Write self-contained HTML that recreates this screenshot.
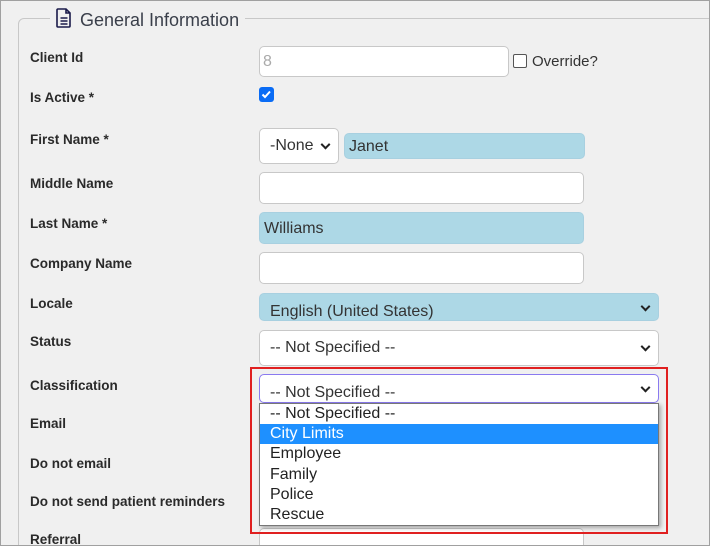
<!DOCTYPE html><html style="width:710px;height:546px;overflow:hidden"><head><style>
body{margin:0;width:710px;height:546px;overflow:hidden;background:#f0f0f0;font-family:"Liberation Sans",sans-serif;position:relative}
.frame{position:absolute;left:0;top:0;width:708px;height:544px;border:1px solid #a0a0a0;z-index:5;pointer-events:none}
.fs{position:absolute;left:18px;top:18px;width:700px;height:540px;border:1px solid #c8c8c8;border-radius:6px}
.leg{position:absolute;left:50px;top:8px;background:#f0f0f0;padding:0 6px;font-size:18px;color:#3a3f4a}
.l{position:absolute;left:30px;font-size:13.5px;font-weight:bold;color:#2a2a2a}
.i{position:absolute;background:#fff;border:1px solid #c8c8c8;border-radius:5px;box-sizing:border-box;font-size:16px;color:#333;padding-left:10px;overflow:hidden;white-space:nowrap}
.b{background:#add8e6;border-color:#a8d0e0}
.ch{position:absolute;right:9px;top:50%;width:5px;height:5px;border-right:2px solid #222;border-bottom:2px solid #222;transform:translateY(-70%) rotate(45deg)}
.dd{position:absolute;left:259px;top:403px;width:400px;height:123px;background:#fff;border:1px solid #777;box-sizing:border-box;box-shadow:2px 2px 4px rgba(0,0,0,.3);font-size:16px;color:#222}
.dd div{height:20.2px;line-height:20px;padding-left:10px}
</style></head><body>
<div class="frame"></div>
<div class="fs"></div>
<div class="leg"><svg width="16" height="20" viewBox="0 0 16 20" style="vertical-align:-2px;margin-right:8px"><path d="M2 1h8l4 4v13a1 1 0 0 1-1 1H2a1 1 0 0 1-1-1V2a1 1 0 0 1 1-1zM10 1v4h4M4.5 10h7M4.5 13h7M4.5 16h7" fill="none" stroke="#1a1a4a" stroke-width="1.6"/></svg>General Information</div>
<div class="l" style="top:50px">Client Id</div>
<div class="l" style="top:90px">Is Active *</div>
<div class="l" style="top:132px">First Name *</div>
<div class="l" style="top:176px">Middle Name</div>
<div class="l" style="top:216px">Last Name *</div>
<div class="l" style="top:256px">Company Name</div>
<div class="l" style="top:296px">Locale</div>
<div class="l" style="top:334px">Status</div>
<div class="l" style="top:378px">Classification</div>
<div class="l" style="top:416px">Email</div>
<div class="l" style="top:456px">Do not email</div>
<div class="l" style="top:494px">Do not send patient reminders</div>
<div class="l" style="top:532px">Referral</div>
<div class="i" style="left:259px;top:46px;width:250px;height:31px;line-height:29px;color:#aaa;padding-left:3px">8</div>
<div style="position:absolute;left:513px;top:54px;width:12px;height:12px;border:1px solid #555;border-radius:2px;background:#fff"></div>
<div style="position:absolute;left:532px;top:53px;font-size:15px;color:#333">Override?</div>
<div style="position:absolute;left:259px;top:87px;width:15px;height:15px;background:#0a6cf5;border-radius:3px"><svg width="15" height="15"><path d="M3.5 7.5l2.5 2.5 5-5.5" fill="none" stroke="#fff" stroke-width="2"/></svg></div>
<div class="i" style="left:259px;top:128px;width:80px;height:36px;line-height:34px;padding-left:10px">-None<span class="ch"></span></div>
<div class="i b" style="left:344px;top:133px;width:241px;height:26px;line-height:25px;padding-left:4px">Janet</div>
<div class="i" style="left:259px;top:172px;width:325px;height:32px"></div>
<div class="i b" style="left:259px;top:212px;width:325px;height:32px;line-height:31px;padding-left:4px">Williams</div>
<div class="i" style="left:259px;top:252px;width:325px;height:32px"></div>
<div class="i b" style="left:259px;top:293px;width:400px;height:28px;line-height:36px">English (United States)<span class="ch" style="top:9px;transform:rotate(45deg)"></span></div>
<div class="i" style="left:259px;top:330px;width:400px;height:36px;line-height:34px">-- Not Specified --<span class="ch"></span></div>
<div class="i" style="left:259px;top:374px;width:400px;height:29px;line-height:36px;border-color:#8a7af0">-- Not Specified --<span class="ch"></span></div>
<div class="i" style="left:259px;top:528px;width:325px;height:32px"></div>
<div class="dd"><div>-- Not Specified --</div><div style="background:#1e90ff;color:#fff">City Limits</div><div>Employee</div><div>Family</div><div>Police</div><div>Rescue</div></div>
<div style="position:absolute;left:250px;top:367px;width:414px;height:163px;border:2px solid #e02020"></div>
</body></html>
